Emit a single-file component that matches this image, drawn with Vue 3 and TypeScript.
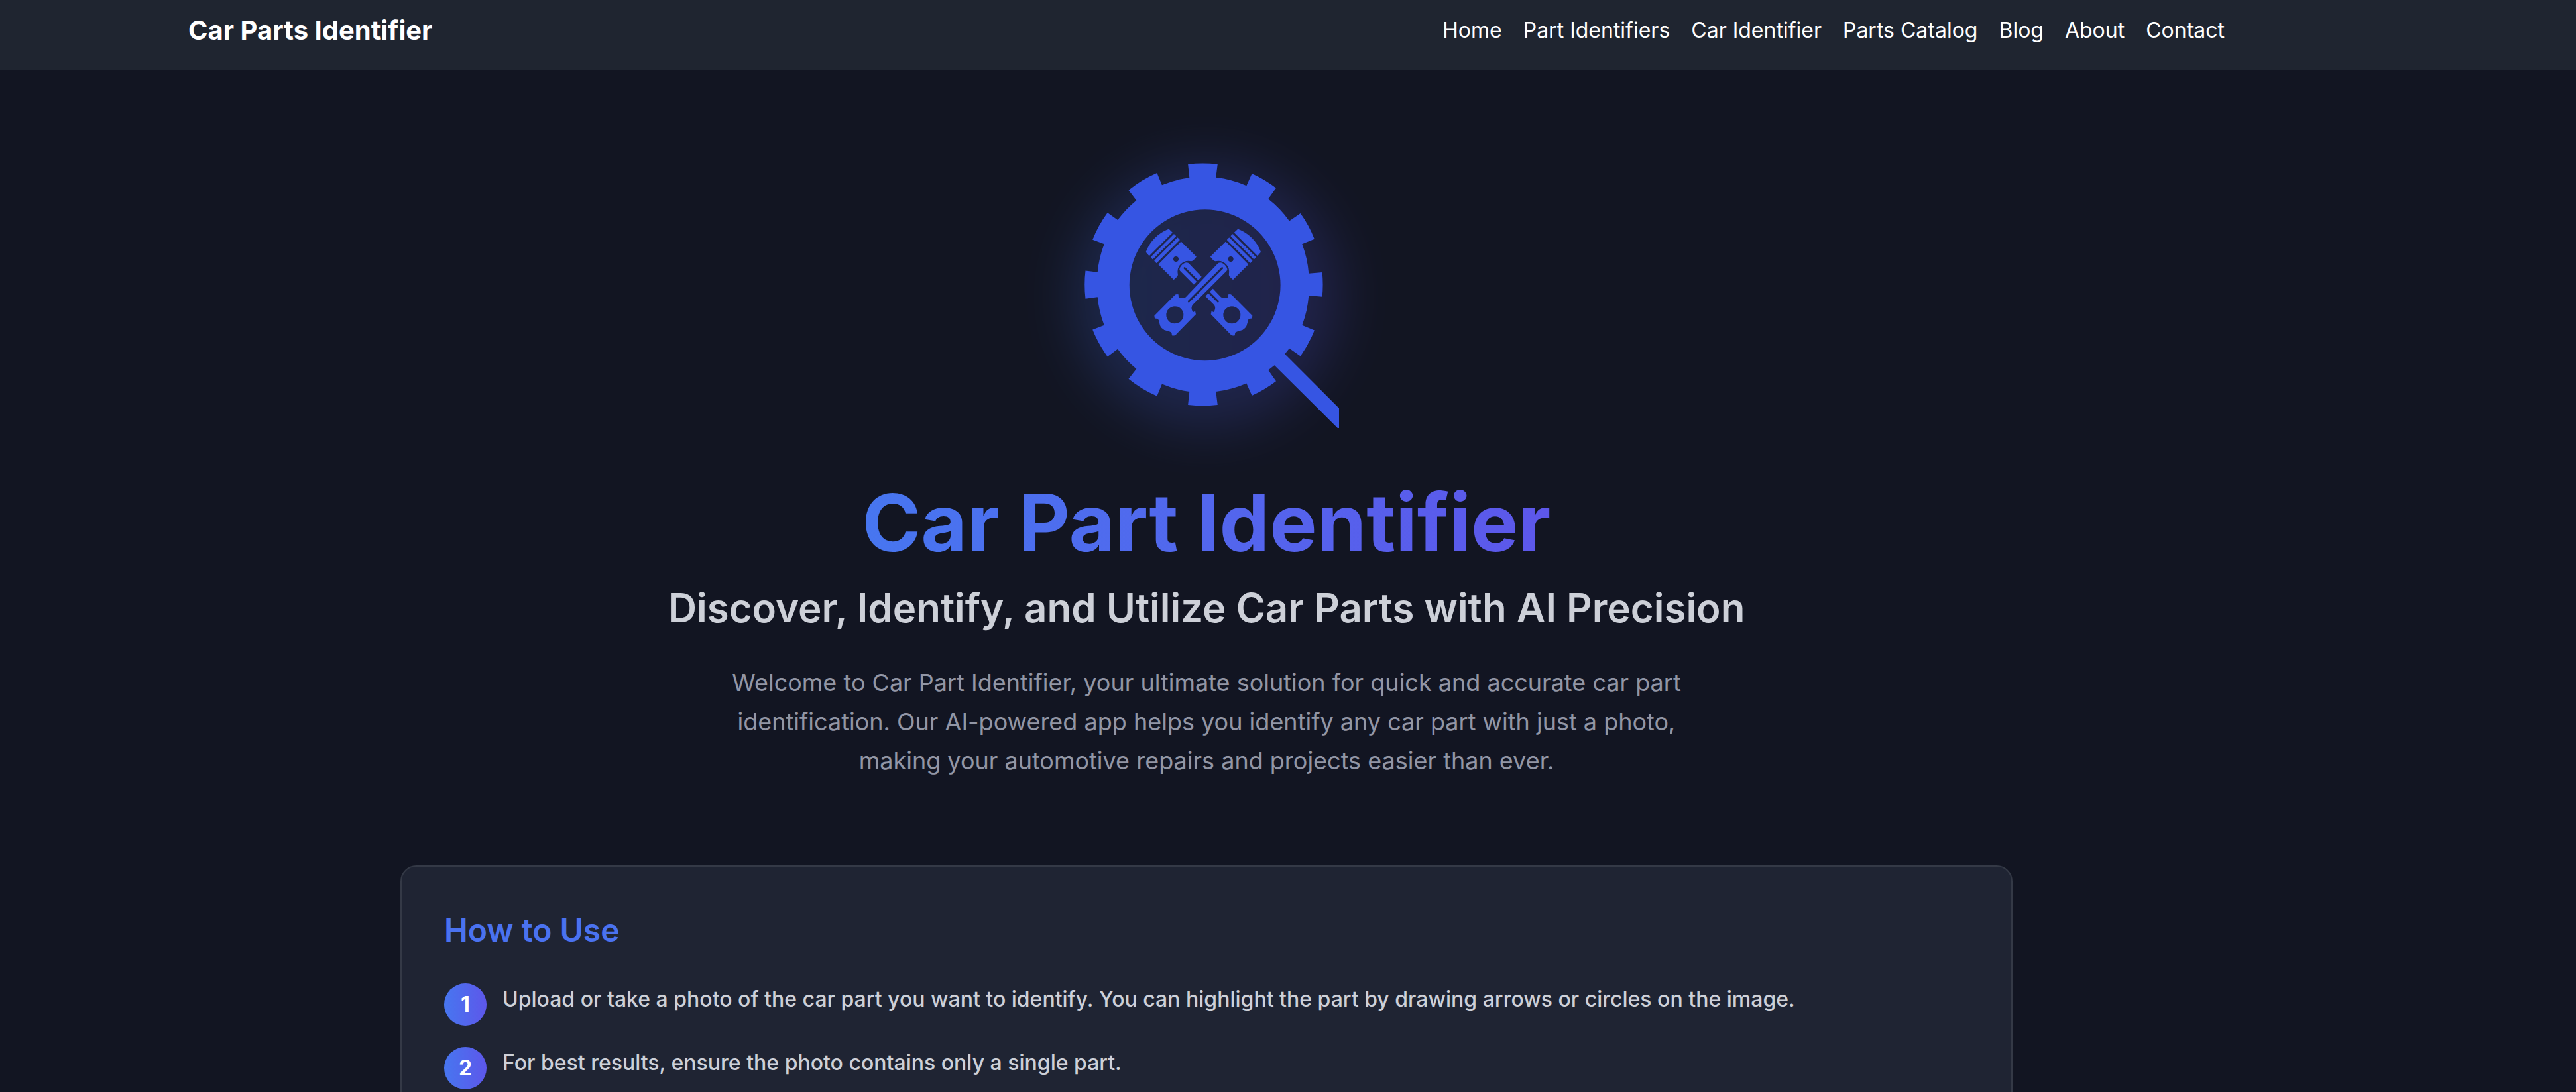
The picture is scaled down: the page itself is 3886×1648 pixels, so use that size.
<script setup lang="ts">
interface NavLink {
  label: string
  href: string
}

const navLinks: NavLink[] = [
  { label: 'Home', href: '#home' },
  { label: 'Part Identifiers', href: '#part-identifiers' },
  { label: 'Car Identifier', href: '#car-identifier' },
  { label: 'Parts Catalog', href: '#parts-catalog' },
  { label: 'Blog', href: '#blog' },
  { label: 'About', href: '#about' },
  { label: 'Contact', href: '#contact' },
]

const steps: string[] = [
  'Upload or take a photo of the car part you want to identify. You can highlight the part by drawing arrows or circles on the image.',
  'For best results, ensure the photo contains only a single part.',
]
</script>

<template>
  <div class="page">
    <header class="header">
      <div class="header-inner">
        <a class="brand" href="#home">Car Parts Identifier</a>
        <nav class="nav" aria-label="Main">
          <a v-for="link in navLinks" :key="link.href" class="nav-link" :href="link.href">{{ link.label }}</a>
        </nav>
      </div>
    </header>

    <main class="main">
      <section class="hero">
        <div class="emblem">
          <svg class="emblem-art" viewBox="224 241 1120 1120" role="img" aria-label="Car Part Identifier logo">
            <defs>
              <mask id="front-cut" maskUnits="userSpaceOnUse" x="0" y="0" width="700" height="640">
                <rect width="700" height="640" fill="#fff" />
                <path d="M431 254 280 405" stroke="#000" stroke-width="9" stroke-linecap="round" />
              </mask>
              <mask id="back-cut" maskUnits="userSpaceOnUse" x="0" y="0" width="700" height="640">
                <rect width="700" height="640" fill="#fff" />
                <path d="M431 254 280 405" stroke="#000" stroke-width="9" stroke-linecap="round" />
                <path d="M300 292 392 384" stroke="#000" stroke-width="74" />
              </mask>
              <g id="piston-head" stroke-width="4" stroke-linejoin="round">
                <path d="M488 93 503 79A174 174 0 0 1 604 181L591 196Z" />
                <path d="M472 109 479 102 582 205 575 212Z" />
                <path d="M455 126 463 118 566 221 558 229Z" />
                <path
                  fill-rule="evenodd"
                  d="M447 137 380 203 393 218Q398 222 406 220C440 215 469 244 464 278Q462 286 466 291L480 304 547 237ZM470 199a14 14 0 1 1 0 28a14 14 0 1 1 0-28Z"
                />
              </g>
              <path
                id="piston-rod"
                fill-rule="evenodd"
                d="M409 236Q416 227 428 230 448 238 454 258 455 263 451 267L297 421Q289 432 295 446L300 453 309 449 312 463 222 555Q218 561 204 559L202 546Q196 541 182 538 152 534 146 500 146 488 138 483L126 482 124 470 217 376Q222 371 233 373L234 386Q250 395 266 386ZM217 427a39 39 0 1 1 0 78a39 39 0 1 1 0-78Z"
              />
            </defs>
            <path
              fill-rule="evenodd"
              d="M706 246A510 510 0 0 1 831 246L824 302A452 452 0 0 1 953 337L976 286A510 510 0 0 1 1078 347L1045 393A452 452 0 0 1 1134 486L1181 454A510 510 0 0 1 1240 562L1188 583A452 452 0 0 1 1216 708L1273 703A510 510 0 0 1 1273 806L1216 801A452 452 0 0 1 1188 926L1240 948A510 510 0 0 1 1181 1057L1134 1024 1115 1048 1344 1277V1361H1338L1071 1096 1045 1116 1078 1163A510 510 0 0 1 976 1224L953 1172A452 452 0 0 1 824 1207L831 1263A510 510 0 0 1 706 1263L712 1207A452 452 0 0 1 596 1175L575 1226A510 510 0 0 1 455 1153L488 1111A452 452 0 0 1 409 1027L366 1059A510 510 0 0 1 303 945L352 926A452 452 0 0 1 324 807L273 814A510 510 0 0 1 273 696L324 702A452 452 0 0 1 352 583L303 565A510 510 0 0 1 366 451L409 482A452 452 0 0 1 488 399L455 356A510 510 0 0 1 575 283L596 334A452 452 0 0 1 712 303ZM777 438A319 319 0 1 0 778 438Z"
            />
            <g class="pistons" transform="translate(448 448) scale(.9333)">
              <g transform="translate(692 0) scale(-1 1)">
                <use href="#piston-head" />
                <g mask="url(#back-cut)"><use href="#piston-rod" /></g>
              </g>
              <use href="#piston-head" />
              <g mask="url(#front-cut)"><use href="#piston-rod" /></g>
            </g>
          </svg>
        </div>
        <h1 class="title">Car Part Identifier</h1>
        <h2 class="subtitle">Discover, Identify, and Utilize Car Parts with AI Precision</h2>
        <p class="intro">
          Welcome to Car Part Identifier, your ultimate solution for quick and accurate car part identification. Our
          AI-powered app helps you identify any car part with just a photo, making your automotive repairs and projects
          easier than ever.
        </p>
      </section>

      <section class="card">
        <h2 class="card-title">How to Use</h2>
        <ol class="steps">
          <li v-for="(step, index) in steps" :key="index" class="step">
            <span class="step-number">{{ index + 1 }}</span>
            <p class="step-text">{{ step }}</p>
          </li>
        </ol>
      </section>
    </main>
  </div>
</template>

<style>
body {
  margin: 0;
  background: #121522;
}
</style>

<style scoped>
.page {
  --accent-start: #4776f0;
  --accent-end: #5d57ea;
  height: 100vh;
  overflow: hidden;
  background: #121522;
  color: #fff;
  font-family: Inter, "Liberation Sans", sans-serif;
}

.header {
  padding: 18px 246px 32px 0;
  background: #1f2530;
}

.header-inner {
  display: flex;
  align-items: center;
  justify-content: space-between;
  max-width: 3072px;
  margin: 0 auto;
}

.brand {
  color: #fff;
  font-size: 40px;
  font-weight: 700;
  line-height: 56px;
  text-decoration: none;
}

.nav {
  display: flex;
  gap: 32px;
}

.nav-link {
  color: #fff;
  font-size: 32px;
  font-weight: 400;
  line-height: 48px;
  text-decoration: none;
}

.main {
  padding: 140px 246px 64px 0;
}

.hero {
  display: flex;
  flex-direction: column;
  align-items: center;
  text-align: center;
}

.emblem {
  position: relative;
  width: 400px;
  height: 400px;
}

.emblem::before {
  content: "";
  position: absolute;
  inset: 0;
  border-radius: 50%;
  background: linear-gradient(to right, var(--accent-start), var(--accent-end));
  filter: blur(40px);
  opacity: 0.2;
}

.emblem-art {
  position: relative;
  display: block;
  width: 100%;
  height: 100%;
  fill: #3655e3;
}

.pistons {
  stroke: #3655e3;
  stroke-width: 0;
}

.title {
  margin: 83px 0 0;
  background: linear-gradient(to right, var(--accent-start), var(--accent-end));
  background-clip: text;
  color: transparent;
  font-size: 120px;
  font-weight: 700;
  line-height: 120px;
}

.subtitle {
  margin: 32px 0 0;
  color: #cdd0d8;
  font-size: 60px;
  font-weight: 600;
  line-height: 72px;
}

.intro {
  max-width: 1536px;
  margin: 48px 0 0;
  color: #9296a5;
  font-size: 36px;
  line-height: 59px;
}

.card {
  box-sizing: border-box;
  max-width: 2432px;
  margin: 128px auto 0;
  padding: 64px;
  border: 2px solid #343946;
  border-radius: 24px;
  background: #1f2433;
}

.card-title {
  margin: 0 0 48px;
  color: #4a72f0;
  font-size: 48px;
  font-weight: 600;
  line-height: 64px;
}

.steps {
  display: flex;
  flex-direction: column;
  gap: 32px;
  margin: 0;
  padding: 0;
  list-style: none;
}

.step {
  display: flex;
  align-items: flex-start;
  gap: 24px;
}

.step-number {
  display: flex;
  flex-shrink: 0;
  align-items: center;
  justify-content: center;
  width: 64px;
  height: 64px;
  border-radius: 50%;
  background: linear-gradient(to right, var(--accent-start), var(--accent-end));
  font-size: 32px;
  font-weight: 700;
  line-height: 48px;
}

.step-text {
  margin: 0;
  color: #cdd0d8;
  font-size: 32px;
  font-weight: 500;
  line-height: 48px;
}
</style>
